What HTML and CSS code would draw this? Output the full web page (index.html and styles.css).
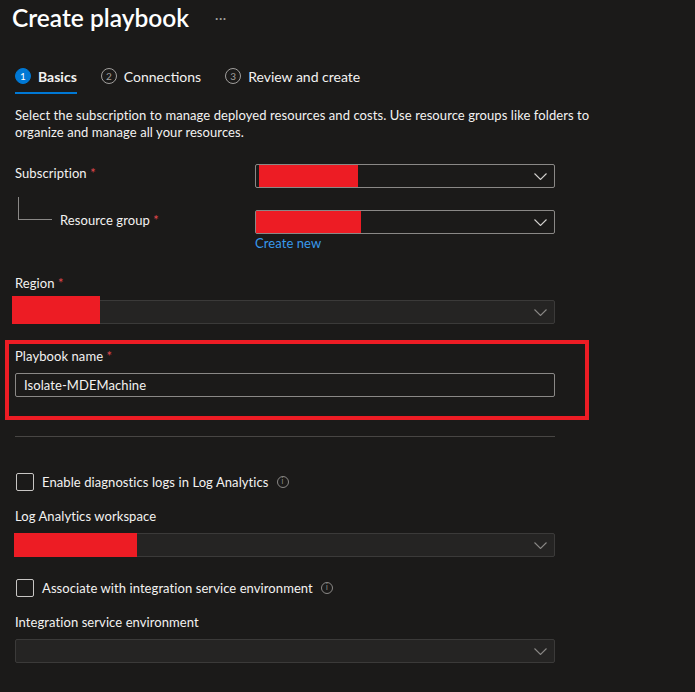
FILE: index.html
```html
<!DOCTYPE html>
<html lang="en">
<head>
<meta charset="utf-8">
<title>Create playbook</title>
<link rel="stylesheet" href="styles.css">
</head>
<body>
<div class="page">
  <header class="titlebar">
    <h1 class="title">Create playbook</h1>
    <span class="more">···</span>
  </header>

  <nav class="tabs">
    <div class="tab active"><span class="num">1</span><span class="tab-text">Basics</span></div>
    <div class="tab"><span class="num">2</span><span class="tab-text">Connections</span></div>
    <div class="tab"><span class="num">3</span><span class="tab-text">Review and create</span></div>
  </nav>

  <p class="desc">Select the subscription to manage deployed resources and costs. Use resource groups like folders to organize and manage all your resources.</p>

  <div class="row row-sub">
    <div class="row-label"><span class="lbl">Subscription <span class="req">*</span></span></div>
    <div class="field">
      <div class="select">
        <span class="redact redact-sub"></span>
        <svg class="chev" width="13" height="7" viewBox="0 0 13 7"><path d="M0.5 0.5 L6.5 6.5 L12.5 0.5" fill="none" stroke="#d2d0ce" stroke-width="1.1"/></svg>
      </div>
    </div>
  </div>

  <div class="row row-rg">
    <div class="row-label">
      <span class="tree"></span>
      <span class="lbl">Resource group <span class="req">*</span></span>
    </div>
    <div class="field">
      <div class="select">
        <span class="redact redact-rg"></span>
        <svg class="chev" width="13" height="7" viewBox="0 0 13 7"><path d="M0.5 0.5 L6.5 6.5 L12.5 0.5" fill="none" stroke="#d2d0ce" stroke-width="1.1"/></svg>
      </div>
      <a class="link" href="#">Create new</a>
    </div>
  </div>

  <div class="stack stack-region">
    <span class="lbl">Region <span class="req">*</span></span>
    <div class="select disabled">
      <span class="redact redact-region"></span>
      <svg class="chev" width="13" height="7" viewBox="0 0 13 7"><path d="M0.5 0.5 L6.5 6.5 L12.5 0.5" fill="none" stroke="#8a8886" stroke-width="1.1"/></svg>
    </div>
  </div>

  <div class="highlight">
    <span class="lbl">Playbook name <span class="req">*</span></span>
    <div class="input">Isolate-MDEMachine</div>
  </div>

  <div class="divider"></div>

  <div class="check check-diag">
    <span class="box"></span>
    <span class="check-text">Enable diagnostics logs in Log Analytics</span>
    <span class="info">i</span>
  </div>

  <div class="stack stack-law">
    <span class="lbl">Log Analytics workspace</span>
    <div class="select disabled">
      <span class="redact redact-law"></span>
      <svg class="chev" width="13" height="7" viewBox="0 0 13 7"><path d="M0.5 0.5 L6.5 6.5 L12.5 0.5" fill="none" stroke="#8a8886" stroke-width="1.1"/></svg>
    </div>
  </div>

  <div class="check check-ise">
    <span class="box"></span>
    <span class="check-text">Associate with integration service environment</span>
    <span class="info">i</span>
  </div>

  <div class="stack stack-ise">
    <span class="lbl">Integration service environment</span>
    <div class="select disabled">
      <svg class="chev" width="13" height="7" viewBox="0 0 13 7"><path d="M0.5 0.5 L6.5 6.5 L12.5 0.5" fill="none" stroke="#8a8886" stroke-width="1.1"/></svg>
    </div>
  </div>
</div>
</body>
</html>
```

FILE: styles.css
```css
* { box-sizing: border-box; }

html, body {
  margin: 0;
  padding: 0;
  background: #1b1a19;
}

body {
  font-family: "Segoe UI", Lato, "Open Sans", sans-serif;
  font-size: 13px;
  letter-spacing: 0.08px;
  color: #f3f2f1;
  height: 692px;
  overflow: hidden;
}

.page {
  padding: 0 0 0 15px;
  width: 695px;
}

/* Title */
.titlebar {
  display: flex;
  align-items: center;
  height: 36px;
  margin-left: -3px;
}
.title {
  margin: 0;
  font-size: 24.5px;
  font-weight: 600;
  line-height: 36px;
  color: #ffffff;
  letter-spacing: 0;
}
.more {
  margin-left: 26px;
  color: #a19f9d;
  font-size: 13px;
  letter-spacing: 0.5px;
  line-height: 36px;
}

/* Tabs */
.tabs {
  display: flex;
  gap: 24px;
  margin-top: 31px;
}
.tab {
  display: flex;
  align-items: center;
  gap: 7px;
  height: 27px;
  padding-bottom: 7px;
  border-bottom: 2px solid transparent;
  font-size: 14px;
  letter-spacing: 0;
  color: #f3f2f1;
}
.tab.active {
  border-bottom-color: #0078d4;
  font-weight: 700;
}
.num {
  width: 16px;
  height: 16px;
  border-radius: 50%;
  border: 1px solid #a19f9d;
  color: #a19f9d;
  font-size: 10px;
  font-weight: 400;
  display: flex;
  align-items: center;
  justify-content: center;
  line-height: 1;
}
.tab.active .num {
  background: #0078d4;
  border-color: #0078d4;
  color: #ffffff;
}

/* Description */
.desc {
  margin: 13px 0 0 0;
  width: 585px;
  line-height: 17px;
  color: #f3f2f1;
}

/* Rows */
.row {
  display: flex;
  align-items: flex-start;
}
.row-sub { margin-top: 23px; }
.row-rg { margin-top: 22px; }

.row-label {
  width: 240px;
  display: flex;
  align-items: flex-start;
}
.row-sub .lbl { line-height: 18px; }
.row-rg .lbl { line-height: 20px; }

.tree {
  display: block;
  margin-left: 3px;
  margin-top: -13px;
  width: 34px;
  height: 23px;
  border-left: 1px solid #8a8886;
  border-bottom: 1px solid #8a8886;
  flex: none;
}
.row-rg .lbl { margin-left: 8px; }

.lbl {
  display: block;
  line-height: 18px;
  color: #f3f2f1;
}
.req { color: #e0474c; }

.field {
  width: 300px;
  display: flex;
  flex-direction: column;
}

.select {
  position: relative;
  height: 24px;
  border: 1px solid #8a8886;
  border-radius: 2px;
  display: flex;
  align-items: stretch;
  background: #1b1a19;
}
.select .chev {
  margin-left: auto;
  margin-right: 7px;
  align-self: center;
  flex: none;
}
.select.disabled {
  background: #252423;
  border-color: #3b3a39;
  width: 540px;
}

.redact {
  display: block;
  background: #ed1c24;
  flex: none;
}
.redact-sub { width: 99px; margin-left: 3px; }
.redact-rg { width: 105px; }
.redact-region { width: 88px; margin-left: -4px; margin-top: -5px; margin-bottom: -1px; }
.redact-law { width: 123px; margin-left: -2px; margin-top: -1px; margin-bottom: -1px; }

.link {
  display: block;
  margin-top: 1px;
  line-height: 17px;
  color: #3899ec;
  text-decoration: none;
}

/* Stacks */
.stack { display: flex; flex-direction: column; align-items: flex-start; }
.stack .lbl { margin-bottom: 8px; }
.stack-region { margin-top: 22px; }
.stack-law { margin-top: 16px; }
.stack-ise { margin-top: 16px; }

/* Highlight */
.highlight {
  margin-top: 16px;
  margin-left: -10px;
  width: 584px;
  border: 4px solid #ed1c24;
  padding: 3px 30px 19px 6px;
}
.highlight .lbl { margin-bottom: 8px; }
.input {
  height: 24px;
  border: 1px solid #8a8886;
  border-radius: 2px;
  padding: 0 8px;
  line-height: 22px;
  color: #f3f2f1;
  width: 540px;
}

.divider {
  margin-top: 16px;
  width: 540px;
  height: 1px;
  background: #484644;
}

/* Checkboxes */
.check {
  display: flex;
  align-items: center;
  height: 18px;
}
.check-diag { margin-top: 36px; }
.check-ise { margin-top: 22px; }
.box {
  width: 18px;
  height: 18px;
  margin-left: 1px;
  border: 1px solid #c8c6c4;
  border-radius: 2px;
  flex: none;
}
.check-text {
  margin-left: 8px;
  line-height: 18px;
}
.info {
  margin-left: 8px;
  width: 12px;
  height: 12px;
  border: 1px solid #8a8886;
  border-radius: 50%;
  color: #8a8886;
  font-size: 8px;
  font-family: "DejaVu Sans", sans-serif;
  display: flex;
  align-items: center;
  justify-content: center;
  line-height: 1;
  flex: none;
}
```
